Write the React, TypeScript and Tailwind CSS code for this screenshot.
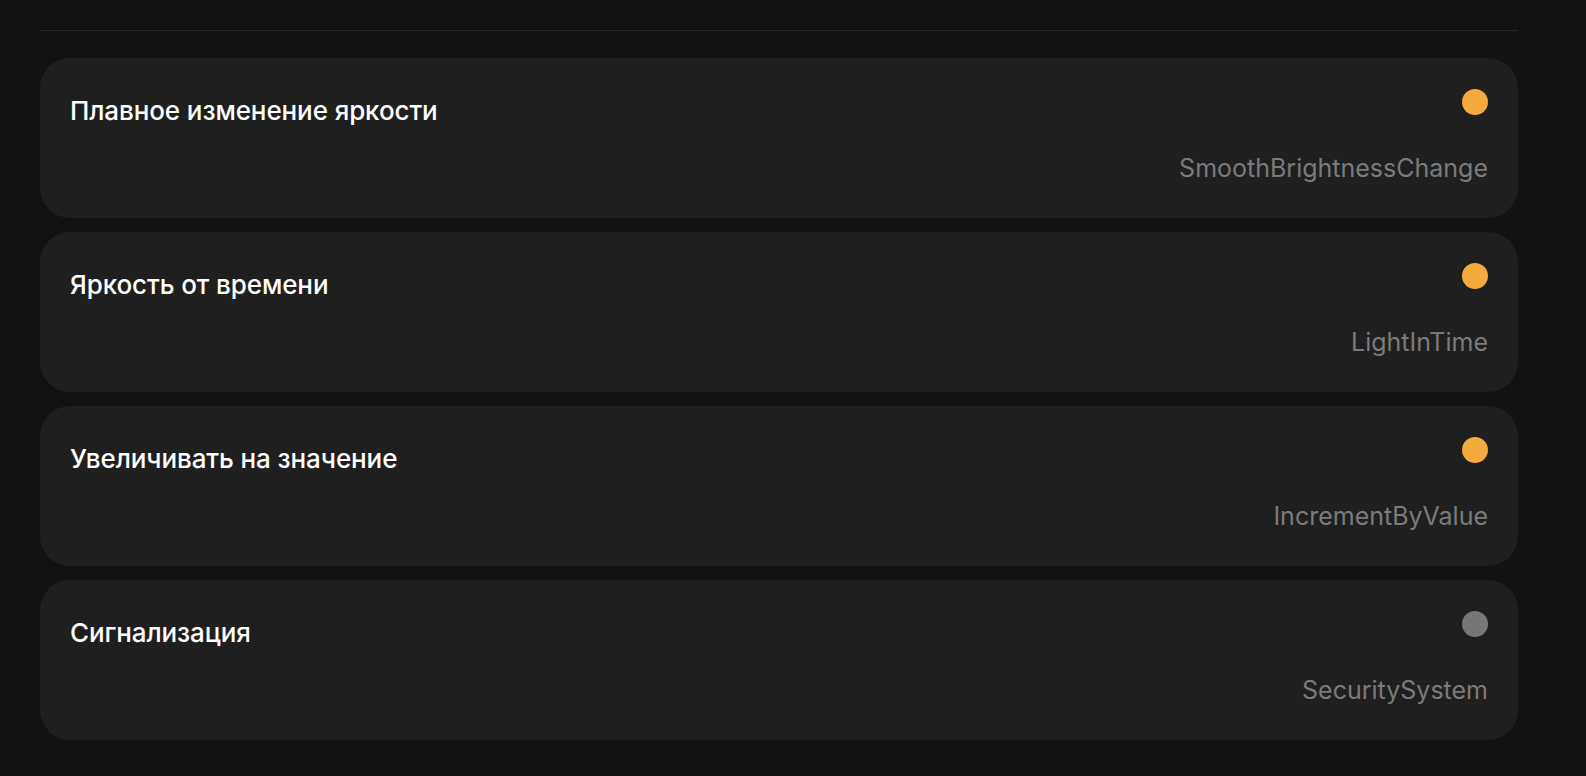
import React from 'react';

const scenarios = [
  { title: 'Плавное изменение яркости', code: 'SmoothBrightnessChange', active: true },
  { title: 'Яркость от времени', code: 'LightInTime', active: true },
  { title: 'Увеличивать на значение', code: 'IncrementByValue', active: true },
  { title: 'Сигнализация', code: 'SecuritySystem', active: false },
];

export default function App() {
  return (
    <div className="min-h-screen bg-[#121212] pl-10 pr-[68px] pt-[30px] font-['Inter','Noto_Sans',sans-serif]">
      <div className="h-px bg-[#2a2a2a]" />

      <div className="mt-[27px] flex flex-col gap-[14px]">
        {scenarios.map((s) => (
          <div
            key={s.code}
            className="flex h-[160px] flex-col rounded-[30px] bg-[#1f1f1f] px-[30px] pt-[31px] pb-[35px]"
          >
            <div className="flex items-start justify-between">
              <span className="mt-[7px] text-[26px] leading-[30px] font-medium tracking-[-0.1px] text-white">
                {s.title}
              </span>
              <span
                className={
                  s.active
                    ? 'h-[26px] w-[26px] rounded-full bg-[#f4aa3d]'
                    : 'h-[26px] w-[26px] rounded-full bg-[#777777]'
                }
              />
            </div>
            <span className="mt-auto self-end text-[25px] leading-[30px] text-[#7b7b7b]">
              {s.code}
            </span>
          </div>
        ))}
      </div>
    </div>
  );
}
